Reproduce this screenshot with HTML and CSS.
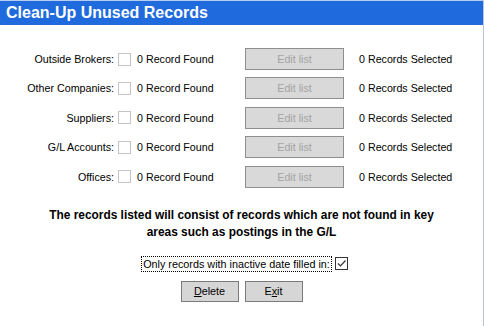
FILE: index.html
```html
<!DOCTYPE html>
<html lang="en">
<head>
  <meta charset="UTF-8" />
  <title>Clean-Up Unused Records</title>
  <link rel="stylesheet" href="styles.css">
</head>
<body>

  <div class="window">
    <div class="titlebar">Clean-Up Unused Records</div>

    <div class="content">
      <div class="rows">
        <label class="row-label" for="chkBrokers">Outside Brokers:</label>
        <span class="box"><input type="checkbox" id="chkBrokers"></span>
        <span class="found">0 Record Found</span>
        <span class="cell"><button class="edit-btn" disabled>Edit list</button></span>
        <span class="selected">0 Records Selected</span>

        <label class="row-label" for="chkCompanies">Other Companies:</label>
        <span class="box"><input type="checkbox" id="chkCompanies"></span>
        <span class="found">0 Record Found</span>
        <span class="cell"><button class="edit-btn" disabled>Edit list</button></span>
        <span class="selected">0 Records Selected</span>

        <label class="row-label" for="chkSuppliers">Suppliers:</label>
        <span class="box"><input type="checkbox" id="chkSuppliers"></span>
        <span class="found">0 Record Found</span>
        <span class="cell"><button class="edit-btn" disabled>Edit list</button></span>
        <span class="selected">0 Records Selected</span>

        <label class="row-label" for="chkAccounts">G/L Accounts:</label>
        <span class="box"><input type="checkbox" id="chkAccounts"></span>
        <span class="found">0 Record Found</span>
        <span class="cell"><button class="edit-btn" disabled>Edit list</button></span>
        <span class="selected">0 Records Selected</span>

        <label class="row-label" for="chkOffices">Offices:</label>
        <span class="box"><input type="checkbox" id="chkOffices"></span>
        <span class="found">0 Record Found</span>
        <span class="cell"><button class="edit-btn" disabled>Edit list</button></span>
        <span class="selected">0 Records Selected</span>
      </div>

      <p class="note">The records listed will consist of records which are not found in key<br>areas such as postings in the G/L</p>

      <div class="option">
        <label class="option-label" for="chkInactive">Only records with inactive date filled in:</label>
        <span class="check-box">
          <svg width="11" height="11" viewBox="0 0 11 11"><path d="M2 5.5 L4.5 8 L9.5 2.5" fill="none" stroke="#333" stroke-width="1.2"/></svg>
        </span>
      </div>

      <div class="actions">
        <button class="act-btn"><u>D</u>elete</button>
        <button class="act-btn">E<u>x</u>it</button>
      </div>
    </div>
  </div>

</body>
</html>
```

FILE: styles.css
```css
* {
  margin: 0; padding: 0; box-sizing: border-box;
  font-family: 'Liberation Sans', Arial, sans-serif;
}
html, body {
  width: 100%; height: 100%;
  background: #fff;
}

.window {
  width: 484px; height: 326px;
  border-top: 1px solid #b8cdef;
  border-right: 1px solid #b4c6e0;
  background: #fff;
}

.titlebar {
  height: 24px;
  background: #1f6bdd;
  color: #fff;
  font-size: 16px; font-weight: bold;
  line-height: 24px;
  padding-left: 6px;
}

.content { display: flex; flex-direction: column; align-items: center; }

.rows {
  width: 100%;
  margin-top: 23px;
  display: grid;
  grid-template-columns: 118px 19px 108px 114px 1fr;
  grid-auto-rows: 22px;
  row-gap: 7.4px;
  align-items: center;
  font-size: 10.7px;
  color: #000;
}

.row-label { text-align: right; padding-right: 4px; }

.box { display: flex; align-items: center; }
.box input {
  appearance: none;
  width: 13px; height: 13px;
  border: 1px solid #c4c4c4;
  background: #fff;
}

.edit-btn {
  width: 99px; height: 22px;
  background: #d9d9d9;
  border: 1px solid #8e8e8e;
  color: #a3a3a3;
  font-size: 10.7px;
}

.note {
  margin-top: 19px;
  font-size: 11.9px; font-weight: bold;
  line-height: 17px;
  text-align: center;
  color: #000;
}

.option {
  margin-top: 15px;
  margin-left: 6px;
  display: flex; align-items: center;
  font-size: 10.8px;
}

.option-label {
  border: 1px dotted #000;
  line-height: 14px;
  padding: 0 1px;
}

.check-box {
  width: 13px; height: 13px;
  margin-left: 3px;
  border: 1px solid #333;
  background: #fff;
  display: flex; align-items: center; justify-content: center;
}

.actions {
  margin-top: 9px;
  display: flex; gap: 6px;
}

.act-btn {
  width: 58px; height: 21px;
  background: #d6d6d6;
  border: 1px solid #7a7a7a;
  color: #000;
  font-size: 10.8px;
}
```
